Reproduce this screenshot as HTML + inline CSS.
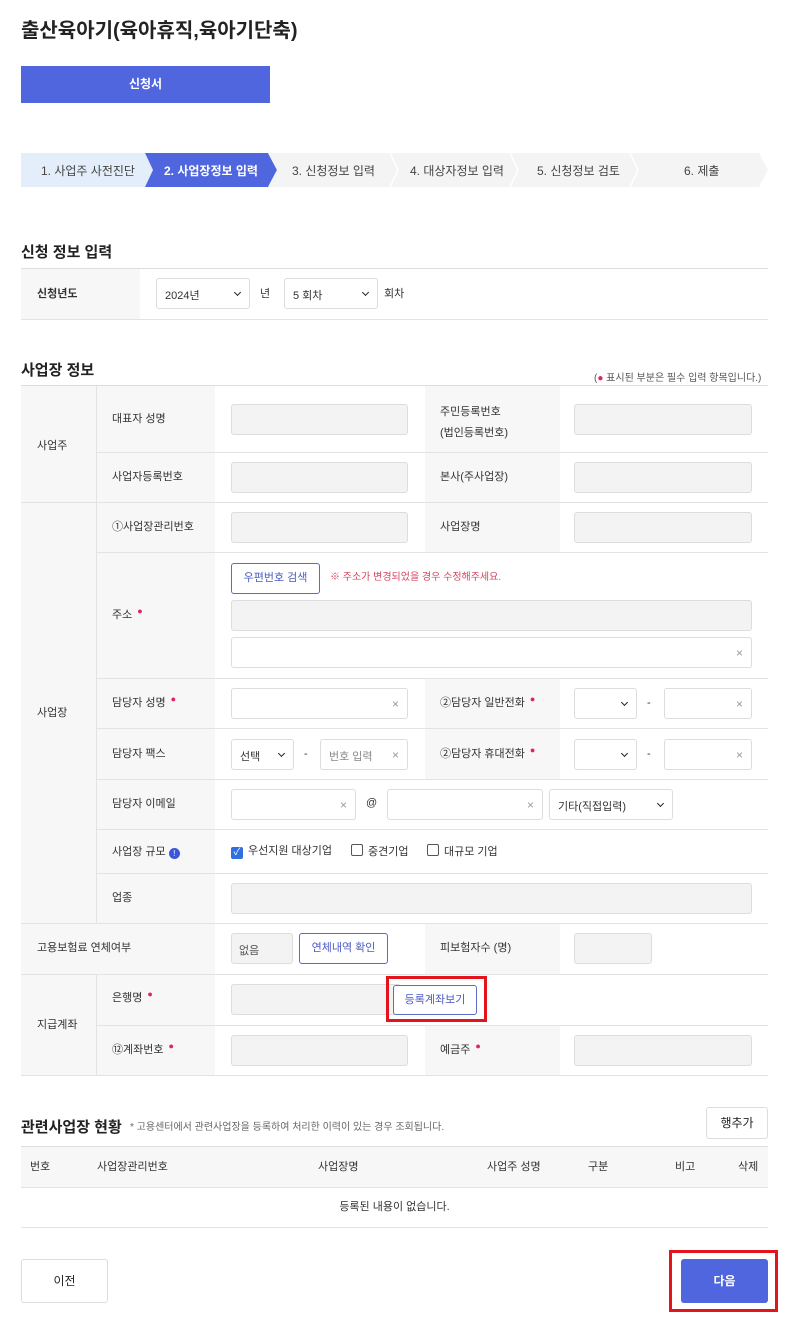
<!DOCTYPE html>
<html><head><meta charset="utf-8">
<style>
*{margin:0;padding:0;box-sizing:border-box}
body{width:800px;height:1344px;background:#fff;position:relative;font-family:"Liberation Sans","Noto Sans CJK KR",sans-serif;color:#222;overflow:hidden}
.a{position:absolute}
.t{position:absolute;font-size:11px;color:#333;white-space:nowrap;line-height:14px}
.g{position:absolute;background:#f7f7f7}
.h{position:absolute;height:1px;background:#e3e3e3}
.in{position:absolute;height:31px;border:1px solid #ddd;border-radius:3px;background:#f3f3f3}
.iw{position:absolute;height:31px;border:1px solid #ddd;border-radius:3px;background:#fff;font-size:11px;color:#555}
.x{position:absolute;right:8px;top:8px;font-size:12px;color:#999;line-height:14px}
.sel{position:absolute;height:31px;border:1px solid #ddd;border-radius:3px;background:#fff;font-size:11px;color:#333;padding:8px 0 0 8px}
.sel:after{content:"";position:absolute;right:9px;top:11px;width:4px;height:4px;border-right:1.6px solid #222;border-bottom:1.6px solid #222;transform:rotate(45deg)}
.r{color:#e0245e;font-size:9px;position:relative;top:-4px;margin-left:5px}
.btn{position:absolute;border:1px solid #5a6bc9;border-radius:3px;background:#fff;color:#4b5bc5;font-size:11px;text-align:center}
.cb{display:inline-block;width:12px;height:12px;border:1px solid #555;border-radius:2px;vertical-align:-1px;margin-right:5px;background:#fff}
</style></head><body>
<div class="a" style="left:21px;top:14px;font-size:20px;font-weight:bold;color:#222">출산육아기(육아휴직,육아기단축)</div>
<div class="a" style="left:21px;top:66px;width:249px;height:37px;background:#4f66df;color:#fff;font-size:12px;font-weight:bold;text-align:center;line-height:37px">신청서</div>

<svg class="a" style="left:0;top:153px" width="800" height="35">
<polygon points="21,0 145,0 153,17 145,34 21,34" fill="#e4eefb"/>
<polygon points="145,0 268,0 277,17 268,34 145,34 153,17" fill="#4f66df"/>
<polygon points="268,0 390,0 398,17 390,34 268,34 277,17" fill="#f4f4f4"/>
<polygon points="390,0 510,0 518,17 510,34 390,34 398,17" fill="#f4f4f4"/>
<polygon points="510,0 630,0 638,17 630,34 510,34 518,17" fill="#f4f4f4"/>
<polygon points="630,0 759,0 768,17 759,34 630,34 638,17" fill="#f4f4f4"/>
<polyline points="390,0 398,17 390,34" fill="none" stroke="#fff" stroke-width="1.5"/>
<polyline points="510,0 518,17 510,34" fill="none" stroke="#fff" stroke-width="1.5"/>
<polyline points="630,0 638,17 630,34" fill="none" stroke="#fff" stroke-width="1.5"/>
<g font-size="12" font-family="Liberation Sans,Noto Sans CJK KR,sans-serif" fill="#444">
<text x="41" y="22">1. 사업주 사전진단</text>
<text x="164" y="22" fill="#fff" font-weight="bold">2. 사업장정보 입력</text>
<text x="292" y="22">3. 신청정보 입력</text>
<text x="410" y="22">4. 대상자정보 입력</text>
<text x="537" y="22">5. 신청정보 검토</text>
<text x="684" y="22">6. 제출</text>
</g></svg>

<div class="a" style="left:21px;top:241px;font-size:15px;font-weight:bold">신청 정보 입력</div>
<div class="h" style="left:21px;top:268px;width:747px;background:#ddd"></div>
<div class="g" style="left:21px;top:269px;width:119px;height:50px"></div>
<div class="h" style="left:21px;top:319px;width:747px"></div>
<div class="t" style="left:37px;top:287px;font-weight:bold">신청년도</div>
<div class="sel" style="left:156px;top:278px;width:94px">2024년</div>
<div class="t" style="left:260px;top:287px">년</div>
<div class="sel" style="left:284px;top:278px;width:94px">5 회차</div>
<div class="t" style="left:384px;top:287px">회차</div>

<div class="a" style="left:21px;top:359px;font-size:15px;font-weight:bold">사업장 정보</div>
<div class="t" style="left:594px;top:372px;font-size:10px;color:#555">(<span style="color:#e0245e">●</span> 표시된 부분은 필수 입력 항목입니다.)</div>

<div class="g" style="left:21px;top:386px;width:194px;height:689px"></div>
<div class="a" style="left:96px;top:386px;width:1px;height:537px;background:#e3e3e3"></div>
<div class="a" style="left:96px;top:974px;width:1px;height:101px;background:#e3e3e3"></div>
<div class="g" style="left:425px;top:386px;width:135px;height:166px"></div>
<div class="g" style="left:425px;top:678px;width:135px;height:101px"></div>
<div class="g" style="left:425px;top:923px;width:135px;height:51px"></div>
<div class="g" style="left:425px;top:1025px;width:135px;height:50px"></div>
<div class="h" style="left:21px;top:385px;width:747px;background:#ddd"></div>
<div class="h" style="left:96px;top:452px;width:672px"></div>
<div class="h" style="left:21px;top:502px;width:747px"></div>
<div class="h" style="left:96px;top:552px;width:672px"></div>
<div class="h" style="left:96px;top:678px;width:672px"></div>
<div class="h" style="left:96px;top:728px;width:672px"></div>
<div class="h" style="left:96px;top:779px;width:672px"></div>
<div class="h" style="left:96px;top:829px;width:672px"></div>
<div class="h" style="left:96px;top:873px;width:672px"></div>
<div class="h" style="left:21px;top:923px;width:747px"></div>
<div class="h" style="left:21px;top:974px;width:747px"></div>
<div class="h" style="left:96px;top:1025px;width:672px"></div>
<div class="h" style="left:21px;top:1075px;width:747px"></div>

<div class="t" style="left:37px;top:439px">사업주</div>
<div class="t" style="left:37px;top:706px">사업장</div>
<div class="t" style="left:37px;top:941px">고용보험료 연체여부</div>
<div class="t" style="left:37px;top:1018px">지급계좌</div>

<div class="t" style="left:112px;top:412px">대표자 성명</div>
<div class="in" style="left:231px;top:404px;width:177px"></div>
<div class="t" style="left:440px;top:402px;line-height:21px">주민등록번호<br>(법인등록번호)</div>
<div class="in" style="left:574px;top:404px;width:178px"></div>

<div class="t" style="left:112px;top:470px">사업자등록번호</div>
<div class="in" style="left:231px;top:462px;width:177px"></div>
<div class="t" style="left:440px;top:470px">본사(주사업장)</div>
<div class="in" style="left:574px;top:462px;width:178px"></div>

<div class="t" style="left:112px;top:520px">①사업장관리번호</div>
<div class="in" style="left:231px;top:512px;width:177px"></div>
<div class="t" style="left:440px;top:520px">사업장명</div>
<div class="in" style="left:574px;top:512px;width:178px"></div>

<div class="t" style="left:112px;top:608px">주소<span class="r">●</span></div>
<div class="btn" style="left:231px;top:563px;width:89px;height:31px;line-height:29px">우편번호 검색</div>
<div class="t" style="left:330px;top:571px;font-size:10px;color:#d9435f">※ 주소가 변경되었을 경우 수정해주세요.</div>
<div class="in" style="left:231px;top:600px;width:521px"></div>
<div class="iw" style="left:231px;top:637px;width:521px"><span class="x">×</span></div>

<div class="t" style="left:112px;top:696px">담당자 성명<span class="r">●</span></div>
<div class="iw" style="left:231px;top:688px;width:177px"><span class="x">×</span></div>
<div class="t" style="left:440px;top:696px">②담당자 일반전화<span class="r">●</span></div>
<div class="sel" style="left:574px;top:688px;width:63px"></div>
<div class="t" style="left:647px;top:696px">-</div>
<div class="iw" style="left:664px;top:688px;width:88px"><span class="x">×</span></div>

<div class="t" style="left:112px;top:747px">담당자 팩스</div>
<div class="sel" style="left:231px;top:739px;width:63px">선택</div>
<div class="t" style="left:304px;top:747px">-</div>
<div class="iw" style="left:320px;top:739px;width:88px"><span class="a" style="left:8px;top:8px;color:#888">번호 입력</span><span class="x">×</span></div>
<div class="t" style="left:440px;top:747px">②담당자 휴대전화<span class="r">●</span></div>
<div class="sel" style="left:574px;top:739px;width:63px"></div>
<div class="t" style="left:647px;top:747px">-</div>
<div class="iw" style="left:664px;top:739px;width:88px"><span class="x">×</span></div>

<div class="t" style="left:112px;top:797px">담당자 이메일</div>
<div class="iw" style="left:231px;top:789px;width:125px"><span class="x">×</span></div>
<div class="t" style="left:366px;top:796px">@</div>
<div class="iw" style="left:387px;top:789px;width:156px"><span class="x">×</span></div>
<div class="sel" style="left:549px;top:789px;width:124px">기타(직접입력)</div>

<div class="t" style="left:112px;top:845px">사업장 규모 <span style="display:inline-block;width:11px;height:11px;border-radius:50%;background:#3d56d6;color:#fff;font-size:8px;text-align:center;line-height:11px;vertical-align:-1px">!</span></div>
<div class="t" style="left:231px;top:844px"><span class="cb" style="background:#2f6fe0;border-color:#2f6fe0;color:#fff;font-size:10px;line-height:10px;text-align:center">✓</span>우선지원 대상기업</div>
<div class="t" style="left:351px;top:844px"><span class="cb"></span>중견기업</div>
<div class="t" style="left:427px;top:844px"><span class="cb"></span>대규모 기업</div>

<div class="t" style="left:112px;top:891px">업종</div>
<div class="in" style="left:231px;top:883px;width:521px"></div>

<div class="in" style="left:231px;top:933px;width:62px;font-size:11px;color:#555;padding:8px 0 0 7px">없음</div>
<div class="btn" style="left:299px;top:933px;width:89px;height:31px;line-height:29px">연체내역 확인</div>
<div class="t" style="left:440px;top:941px">피보험자수 (명)</div>
<div class="in" style="left:574px;top:933px;width:78px"></div>

<div class="t" style="left:112px;top:991px">은행명<span class="r">●</span></div>
<div class="in" style="left:231px;top:984px;width:170px"></div>
<div class="btn" style="left:393px;top:985px;width:84px;height:30px;line-height:28px">등록계좌보기</div>
<div class="a" style="left:386px;top:976px;width:101px;height:46px;border:3px solid #e4141c"></div>

<div class="t" style="left:112px;top:1043px">⑫계좌번호<span class="r">●</span></div>
<div class="in" style="left:231px;top:1035px;width:177px"></div>
<div class="t" style="left:440px;top:1043px">예금주<span class="r">●</span></div>
<div class="in" style="left:574px;top:1035px;width:178px"></div>

<div class="a" style="left:21px;top:1116px;font-size:15px;font-weight:bold">관련사업장 현황</div>
<div class="t" style="left:130px;top:1121px;font-size:10px;color:#666">* 고용센터에서 관련사업장을 등록하여 처리한 이력이 있는 경우 조회됩니다.</div>
<div class="a" style="left:706px;top:1107px;width:62px;height:32px;border:1px solid #ddd;border-radius:3px;font-size:12px;text-align:center;line-height:30px">행추가</div>
<div class="h" style="left:21px;top:1146px;width:747px;background:#ddd"></div>
<div class="g" style="left:21px;top:1147px;width:747px;height:40px"></div>
<div class="h" style="left:21px;top:1187px;width:747px"></div>
<div class="t" style="left:30px;top:1160px">번호</div>
<div class="t" style="left:97px;top:1160px">사업장관리번호</div>
<div class="t" style="left:318px;top:1160px">사업장명</div>
<div class="t" style="left:487px;top:1160px">사업주 성명</div>
<div class="t" style="left:588px;top:1160px">구분</div>
<div class="t" style="left:675px;top:1160px">비고</div>
<div class="t" style="left:738px;top:1160px">삭제</div>
<div class="t" style="left:21px;top:1200px;width:747px;text-align:center">등록된 내용이 없습니다.</div>
<div class="h" style="left:21px;top:1227px;width:747px"></div>

<div class="a" style="left:21px;top:1259px;width:87px;height:44px;border:1px solid #ddd;border-radius:3px;font-size:12px;text-align:center;line-height:42px">이전</div>
<div class="a" style="left:669px;top:1250px;width:109px;height:62px;border:3px solid #e4141c"></div>
<div class="a" style="left:681px;top:1259px;width:87px;height:44px;background:#4f66df;border-radius:3px;color:#fff;font-size:12px;font-weight:bold;text-align:center;line-height:44px">다음</div>
</body></html>
